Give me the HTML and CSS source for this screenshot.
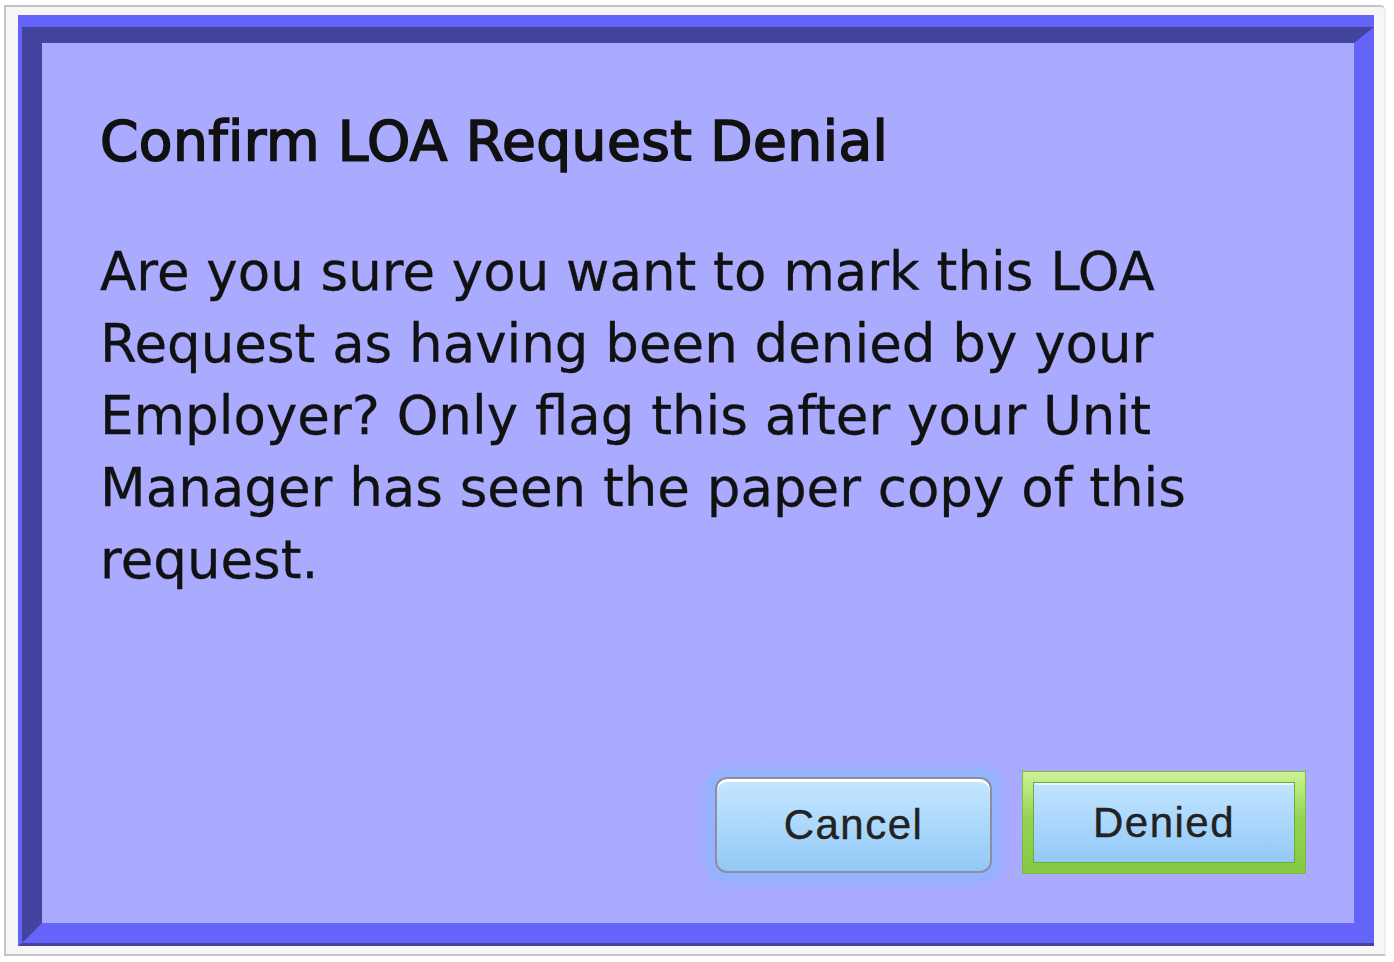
FILE: index.html
```html
<!DOCTYPE html>
<html lang="en">
<head>
  <meta charset="UTF-8">
  <meta name="viewport" content="width=device-width, initial-scale=1.0">
  <title>Confirm LOA Request Denial</title>
  <link rel="stylesheet" href="styles.css">
</head>
<body>
  <div class="page">
    <div class="frame">
      <div class="dialog">
        <h1 class="dialog-title">Confirm LOA Request Denial</h1>
        <p class="dialog-text">Are you sure you want to mark this LOA Request as having been denied by your Employer? Only flag this after your Unit Manager has seen the paper copy of this request.</p>

        <div class="actions">
          <button class="btn btn-cancel">Cancel</button>
          <button class="btn btn-denied">Denied</button>
        </div>
      </div>
    </div>
  </div>
</body>
</html>
```

FILE: styles.css
```css
body {
  margin: 0;
  background: #ffffff;
  font-family: "DejaVu Sans", Verdana, sans-serif;
  color: #111;
}

.page {
  margin: 5px 8px 0 4px;
  padding: 8px 10px 8px 12px;
  border: 2px solid #c4c4c4;
  border-right-color: #ececec;
  border-top-right-radius: 6px;
  background: #f6f6f6;
}

/* outer ring of the bevel */
.frame {
  border-style: solid;
  border-width: 12px 0 3px 4px;
  border-color: #6464fa #6464fa #44449e #6464fa;
}

.dialog {
  box-sizing: border-box;
  height: 916px;
  display: flex;
  flex-direction: column;
  padding: 66px 49px 50px 58px;
  background: #aaaaff;
  border-style: solid;
  border-width: 16px 20px 20px 20px;
  border-color: #44449e #6464fa #6464fa #44449e;
}

.dialog-title {
  margin: 0;
  font-size: 55px;
  font-weight: normal;
  line-height: 64px;
  letter-spacing: 0.45px;
  -webkit-text-stroke: 1.7px #111;
}

.dialog-text {
  margin: 63px 0 0 0;
  font-size: 53px;
  line-height: 72px;
  -webkit-text-stroke: 0.3px #111;
}

.actions {
  margin-top: auto;
  display: flex;
  justify-content: flex-end;
  align-items: flex-end;
  gap: 31px;
}

.btn {
  box-sizing: border-box;
  font-family: "Liberation Sans", Arial, sans-serif;
  font-size: 42px;
  letter-spacing: 1.5px;
  color: #222;
  cursor: pointer;
  padding: 0;
  -webkit-text-stroke: 0.4px #222;
}

.btn-cancel {
  width: 277px;
  height: 96px;
  border: 2px solid #8e8ea0;
  border-radius: 12px;
  background: linear-gradient(#c6e7ff, #acd8fc 50%, #92c8f6);
  box-shadow: inset 0 3px 0 #ffffff, 0 0 0 8px rgba(148, 178, 255, 0.9), 0 0 6px 13px rgba(148, 178, 255, 0.6);
}

.btn-denied {
  width: 282px;
  height: 101px;
  border: 10px solid transparent;
  background:
    linear-gradient(#c2e4ff, #aad7fc 50%, #92c8f6) padding-box,
    linear-gradient(#cdf396, #94d452 45%, #86c844) border-box;
  box-shadow: inset 0 0 0 1px #6da93c, inset 0 3px 0 #e4f4ff, 0 0 0 1px #7cba40;
}
```
